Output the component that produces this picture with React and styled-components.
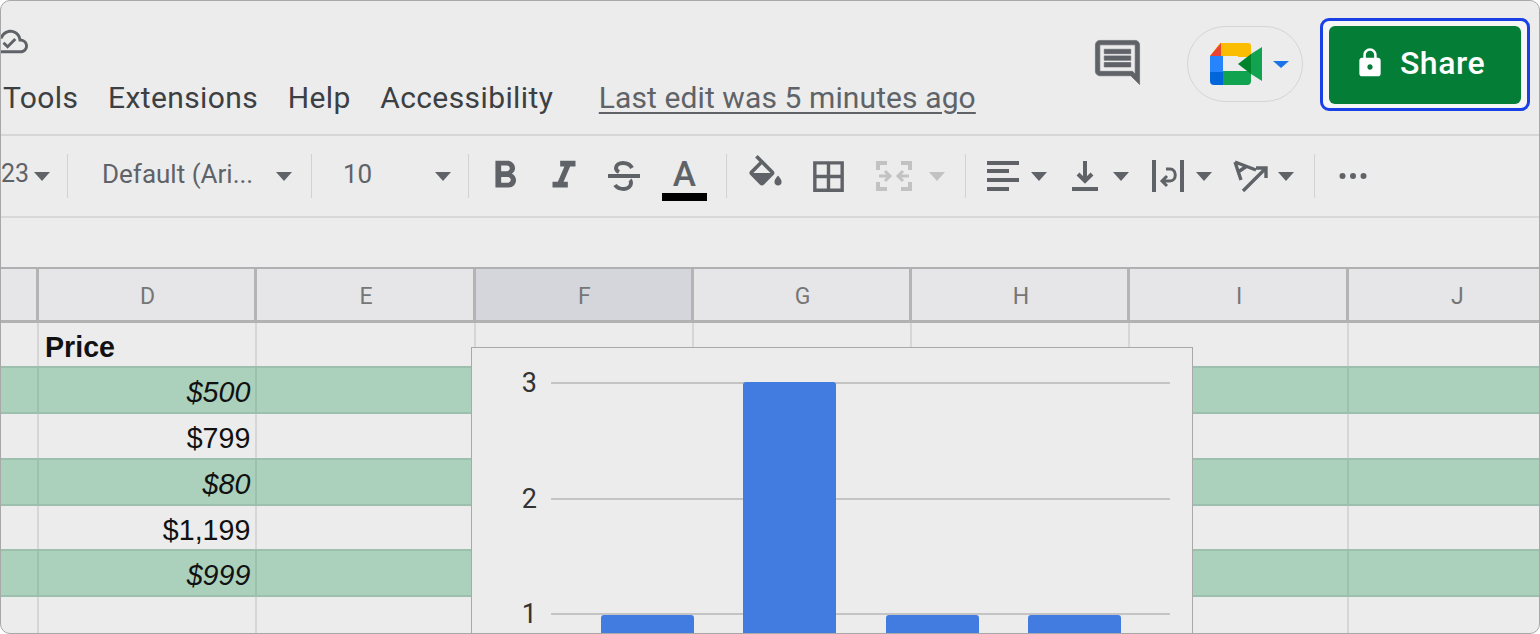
import styled, { createGlobalStyle } from "styled-components";
import { MdFormatBold, MdFormatItalic, MdBorderAll, MdLock } from "react-icons/md";

const GlobalStyle = createGlobalStyle`
  html, body {
    margin: 0;
    padding: 0;
    background: #fff;
    font-family: Roboto, "Liberation Sans", sans-serif;
  }
`;

const ICON = "#5f6368";
const COLUMNS = ["D", "E", "F", "G", "H", "I", "J"];

const Frame = styled.div`
  position: relative;
  box-sizing: border-box;
  width: 1540px;
  height: 634px;
  overflow: hidden;
  border: 1px solid #a8a8a8;
  border-radius: 10px;
  background: #ececec;
`;

const Header = styled.header`
  box-sizing: border-box;
  display: flex;
  justify-content: space-between;
  height: 135px;
  border-bottom: 2px solid #d6d6d6;
`;

const Titles = styled.div`
  display: flex;
  flex-direction: column;
`;

const CloudIcon = styled.svg`
  display: block;
  width: 35px;
  height: 35px;
  margin: 23px 0 0 -8px;
  fill: ${ICON};
`;

const MenuBar = styled.nav`
  display: flex;
  align-items: center;
  gap: 29.5px;
  height: 40px;
  margin: 18px 0 0 2px;
  font-size: 30px;
  letter-spacing: 0.4px;
  color: #3c4043;
`;

const LastEdit = styled.span`
  margin-left: 16px;
  letter-spacing: 0.1px;
  color: ${ICON};
  text-decoration: underline;
  text-decoration-thickness: 2px;
  text-underline-offset: 4px;
`;

const Actions = styled.div`
  display: flex;
  align-items: center;
  height: 92px;
  margin: 17px 9px 0 0;
`;

const CommentIcon = styled.svg`
  display: block;
  width: 53px;
  height: 53px;
  margin: 0 43px 4px 0;
  fill: ${ICON};
  stroke: ${ICON};
  stroke-width: 0.3;
`;

const MeetPill = styled.div`
  box-sizing: border-box;
  display: flex;
  align-items: center;
  width: 116px;
  height: 76px;
  margin-right: 17px;
  padding-left: 22px;
  border: 1px solid #d4d4d4;
  border-radius: 38px;
`;

const BlueCaret = styled.span`
  width: 0;
  height: 0;
  margin-left: 11px;
  border-left: 8px solid transparent;
  border-right: 8px solid transparent;
  border-top: 7px solid #1a73e8;
`;

const ShareRing = styled.div`
  box-sizing: border-box;
  width: 210px;
  height: 93px;
  padding: 5px 6px 4px;
  border: 3px solid #1a41e6;
  border-radius: 9px;
  background: #f6f6f6;
`;

const ShareButton = styled.button`
  display: flex;
  align-items: center;
  justify-content: center;
  gap: 14px;
  width: 100%;
  height: 100%;
  padding: 0 11px 3px 0;
  border: 0;
  border-radius: 6px;
  background: #047d37;
  color: #fff;
  font-family: Roboto, sans-serif;
  font-size: 32px;
  font-weight: 500;
  letter-spacing: 0.5px;
`;

const Toolbar = styled.div`
  box-sizing: border-box;
  display: flex;
  align-items: center;
  height: 82px;
  border-bottom: 2px solid #d8d8d8;
  color: ${ICON};
`;

const Segment = styled.div`
  box-sizing: border-box;
  display: flex;
  flex: none;
  align-items: center;
  gap: ${(p) => p.$gap || 0}px;
  width: ${(p) => p.$w}px;
  padding-left: ${(p) => p.$pad || 0}px;
`;

const Divider = styled.span`
  flex: none;
  width: 1px;
  height: 44px;
  background: #d2d2d2;
`;

const Tool = styled.span`
  display: flex;
  flex: none;
  align-items: center;
  justify-content: center;
  width: ${(p) => p.$w}px;
  height: 48px;
  color: ${(p) => (p.$muted ? "#c2c2c2" : ICON)};
`;

const Caret = styled.span`
  flex: none;
  width: 0;
  height: 0;
  border-left: 8px solid transparent;
  border-right: 8px solid transparent;
  border-top: 9px solid ${(p) => (p.$muted ? "#c2c2c2" : ICON)};
`;

const CaretBox = styled(Tool)`
  width: 18px;
`;

const ToolLabel = styled.span`
  margin-bottom: 5px;
  font-size: ${(p) => p.$size || 26}px;
  white-space: nowrap;
`;

const ColorText = styled.span`
  display: flex;
  flex-direction: column;
  align-items: center;
  width: 45px;
  margin: 5px 0 0 2px;
  font-size: 35px;
  font-weight: 500;
  line-height: 35px;
  color: ${ICON};

  &::after {
    content: "";
    width: 45px;
    height: 8px;
    margin-top: 1px;
    background: #000;
  }
`;

const Glyph = styled.svg`
  display: block;
  fill: none;
  stroke: currentColor;
  stroke-width: 4;
`;

const FormulaBar = styled.div`
  box-sizing: border-box;
  height: 51px;
  border-bottom: 2px solid #b0b0b0;
`;

const Grid = styled.div`
  display: grid;
  grid-template-columns: 38px repeat(7, 218.3px);
  width: 1567px;
`;

const ColumnHeader = styled(Grid)`
  height: 54px;
  box-sizing: border-box;
  border-bottom: 3px solid #b2b2b2;
  background: #e6e6e8;
`;

const HeadCell = styled.div`
  display: flex;
  align-items: center;
  justify-content: center;
  box-sizing: border-box;
  padding: 3px 0 0 2px;
  border-right: 3px solid #b4b4b4;
  background: ${(p) => (p.$selected ? "#d4d6dc" : "transparent")};
  font-size: 23px;
  color: #767676;
`;

const Row = styled(Grid)`
  box-sizing: border-box;
  height: ${(p) => p.$h}px;
  background: ${(p) => (p.$green ? "#abd0bc" : "transparent")};
  border-top: ${(p) => (p.$green ? "2px solid #9cbfae" : "0")};
  border-bottom: ${(p) => (p.$green ? "2px solid #9cbfae" : "0")};
`;

const Cell = styled.div`
  display: flex;
  align-items: center;
  justify-content: ${(p) => (p.$bold ? "flex-start" : "flex-end")};
  box-sizing: border-box;
  padding: 5px 5px 0 6px;
  border-right: 2px solid ${(p) => (p.$green ? "#9dc0af" : "#d6d6d6")};
  font-family: "Liberation Sans", Arial, sans-serif;
  font-size: 28.6px;
  font-style: ${(p) => (p.$italic ? "italic" : "normal")};
  font-weight: ${(p) => (p.$bold ? 700 : 400)};
  color: #111;
`;

const Chart = styled.div`
  position: absolute;
  left: 470px;
  top: 346px;
  box-sizing: border-box;
  width: 722px;
  height: 320px;
  border: 1px solid #a9a9a9;
  background: #ececec;
`;

const ChartSvg = styled.svg`
  display: block;
  font-family: Roboto, sans-serif;
  font-size: 27px;
`;

const Group = styled.div`
  display: flex;
  flex: none;
  align-items: center;
`;

const rows = [
  { h: 43, bold: true, value: "Price" },
  { h: 48, green: true, italic: true, value: "$500" },
  { h: 44, value: "$799" },
  { h: 48, green: true, italic: true, value: "$80" },
  { h: 43, value: "$1,199" },
  { h: 48, green: true, italic: true, value: "$999" },
  { h: 40 },
];

const gridLines = [
  { y: 35, label: "3" },
  { y: 151, label: "2" },
  { y: 266, label: "1" },
];

const bars = [
  { x: 129, y: 267 },
  { x: 271, y: 34 },
  { x: 414, y: 267 },
  { x: 556, y: 267 },
];

const MeetLogo = () => (
  <svg width="52" height="42" viewBox="0 0 52 42">
    <path d="M10 0H38a3 3 0 0 1 3 3V14L28 14V13H13V13H0Z" fill="#fbbc04" />
    <path d="M11 0V13H0Z" fill="#ea4335" />
    <path d="M0 13H13V29H0Z" fill="#2684fc" />
    <path d="M0 29H13V42H4a4 4 0 0 1-4-4Z" fill="#0066da" />
    <path d="M13 28H41V38a4 4 0 0 1-3 4H13Z" fill="#11a34f" />
    <path d="M28 21L41 11V31Z" fill="#00832d" />
    <path d="M41 11L52 4V38L41 31Z" fill="#11a34f" />
  </svg>
);

const Caretted = ({ w, children, muted }) => (
  <>
    <Tool $w={w} $muted={muted}>{children}</Tool>
    <CaretBox><Caret $muted={muted} /></CaretBox>
  </>
);

export default function App() {
  return (
    <>
      <GlobalStyle />
      <Frame>
        <Header>
          <Titles>
            <CloudIcon viewBox="0 0 24 24">
              <path d="M19.35 10.04C18.67 6.59 15.64 4 12 4 9.11 4 6.6 5.64 5.35 8.04 2.34 8.36 0 10.91 0 14c0 3.31 2.69 6 6 6h13c2.76 0 5-2.24 5-5 0-2.64-2.05-4.78-4.65-4.96zM19 18H6c-2.21 0-4-1.79-4-4 0-2.05 1.53-3.76 3.56-3.97l1.07-.11.5-.95C8.08 7.14 9.94 6 12 6c2.62 0 4.88 1.86 5.39 4.43l.3 1.5 1.53.11c1.56.1 2.78 1.41 2.78 2.96 0 1.65-1.35 3-3 3zm-9-3.82l-2.09-2.09L6.5 13.5 10 17l6.01-6.01-1.41-1.41z" />
            </CloudIcon>
            <MenuBar>
              <span>Tools</span>
              <span>Extensions</span>
              <span>Help</span>
              <span>Accessibility</span>
              <LastEdit>Last edit was 5 minutes ago</LastEdit>
            </MenuBar>
          </Titles>
          <Actions>
            <CommentIcon viewBox="0 0 24 24">
              <path d="M20 17.17L18.83 16H4V4h16v13.17zM20 2H4c-1.1 0-2 .9-2 2v12c0 1.1.9 2 2 2h14l4 4V4c0-1.1-.9-2-2-2z" />
              <path d="M6 12h12v2H6zM6 9h12v2H6zM6 6h12v2H6z" />
            </CommentIcon>
            <MeetPill>
              <MeetLogo />
              <BlueCaret />
            </MeetPill>
            <ShareRing>
              <ShareButton>
                <MdLock size={32} />
                Share
              </ShareButton>
            </ShareRing>
          </Actions>
        </Header>

        <Toolbar>
          <Segment $w={66} $gap={5}>
            <ToolLabel $size={25}>23</ToolLabel>
            <Caret />
          </Segment>
          <Divider />
          <Segment $w={243} $pad={34} $gap={23}>
            <ToolLabel>Default (Ari...</ToolLabel>
            <Caret />
          </Segment>
          <Divider />
          <Segment $w={156} $pad={31} $gap={63}>
            <ToolLabel>10</ToolLabel>
            <Caret />
          </Segment>
          <Divider />
          <Segment $w={257} $pad={6}>
            <Tool $w={59.5}><MdFormatBold size={46} /></Tool>
            <Tool $w={59.5}><MdFormatItalic size={46} /></Tool>
            <Tool $w={59.5}>
              <Glyph width="32" height="30" viewBox="0 0 32 30">
                <path d="M24 7C22 3 18 2 15 2 11 2 8 4 8 7c0 2 1 3 3 4" />
                <path d="M0 15H32" />
                <path d="M22 19c1 1 1 2 1 3 0 3-3 6-7 6-4 0-7-1-9-4" />
              </Glyph>
            </Tool>
            <Tool $w={59.5}>
              <ColorText>A</ColorText>
            </Tool>
          </Segment>
          <Divider />
          <Segment $w={238} $pad={7}>
            <Tool $w={62}>
              <svg width="43" height="43" viewBox="0 0 24 24" fill="currentColor">
                <path d="M16.56 8.94L7.62 0 6.21 1.41l2.38 2.38-5.15 5.15c-.59.59-.59 1.54 0 2.12l5.5 5.5c.29.29.68.44 1.06.44s.77-.15 1.06-.44l5.5-5.5c.59-.58.59-1.53 0-2.12zM5.21 10L10 5.21 14.79 10H5.21zM19 11.5s-2 2.17-2 3.5c0 1.1.9 2 2 2s2-.9 2-2c0-1.33-2-3.5-2-3.5z" />
              </svg>
            </Tool>
            <Tool $w={64}><MdBorderAll size={41} /></Tool>
            <Tool $w={68} $muted>
              <Glyph width="36" height="30" viewBox="0 0 36 30">
                <path d="M2 9V2H11M25 2H34V9M2 21V28H11M25 28H34V21" />
                <path d="M3 15H14M9 10L14 15L9 20M33 15H22M27 10L22 15L27 20" strokeWidth="3" />
              </Glyph>
            </Tool>
            <CaretBox><Caret $muted /></CaretBox>
          </Segment>
          <Divider />
          <Segment $w={348} $pad={10} $gap={10}>
            <Group>
              <Caretted w={54}>
                <Glyph width="32" height="32" viewBox="0 0 32 32">
                  <path d="M0 3H32M0 11H22M0 20H32M0 29H22" />
                </Glyph>
              </Caretted>
            </Group>
            <Group>
              <Caretted w={54}>
                <Glyph width="26" height="32" viewBox="0 0 26 32">
                  <path d="M13 1V20M6 14L13 21L20 14M0 29H26" />
                </Glyph>
              </Caretted>
            </Group>
            <Group>
              <Caretted w={55}>
                <Glyph width="32" height="32" viewBox="0 0 32 32">
                  <path d="M2 0V32M30 0V32" />
                  <path d="M14 9H18C25 9 25 21 18 21H10M15 16L10 21L15 26" strokeWidth="3" />
                </Glyph>
              </Caretted>
            </Group>
            <Group>
              <Caretted w={54}>
                <Glyph width="35" height="32" viewBox="0 0 35 32">
                  <path d="M2 2L23 10M2 2L8 20M5 12L14 6" strokeWidth="3.4" />
                  <path d="M10 31L32 9M23 8H33V18" strokeWidth="3.4" />
                </Glyph>
              </Caretted>
            </Group>
          </Segment>
          <Divider />
          <Segment $w={76} $pad={24}>
            <svg width="28" height="8" viewBox="0 0 28 8" fill={ICON}>
              <circle cx="3.5" cy="4" r="3" />
              <circle cx="14" cy="4" r="3" />
              <circle cx="24.5" cy="4" r="3" />
            </svg>
          </Segment>
        </Toolbar>

        <FormulaBar />

        <ColumnHeader>
          <HeadCell />
          {COLUMNS.map((c) => (
            <HeadCell key={c} $selected={c === "F"}>{c}</HeadCell>
          ))}
        </ColumnHeader>

        {rows.map((row, i) => (
          <Row key={i} $h={row.h} $green={row.green}>
            <Cell $green={row.green} />
            <Cell $green={row.green} $bold={row.bold} $italic={row.italic}>
              {row.value}
            </Cell>
            {COLUMNS.slice(1).map((c) => (
              <Cell key={c} $green={row.green} />
            ))}
          </Row>
        ))}

        <Chart>
          <ChartSvg width="720" height="318" viewBox="0 0 720 318">
            {gridLines.map((l) => (
              <g key={l.label}>
                <line x1="79" x2="698" y1={l.y} y2={l.y} stroke="#c4c4c4" strokeWidth="2" />
                <text x="65" y={l.y + 9} textAnchor="end" fill="#333">{l.label}</text>
              </g>
            ))}
            {bars.map((b) => (
              <rect key={b.x} x={b.x} y={b.y} width="93" height={318 - b.y + 8} rx="3" fill="#437ce0" />
            ))}
          </ChartSvg>
        </Chart>
      </Frame>
    </>
  );
}
